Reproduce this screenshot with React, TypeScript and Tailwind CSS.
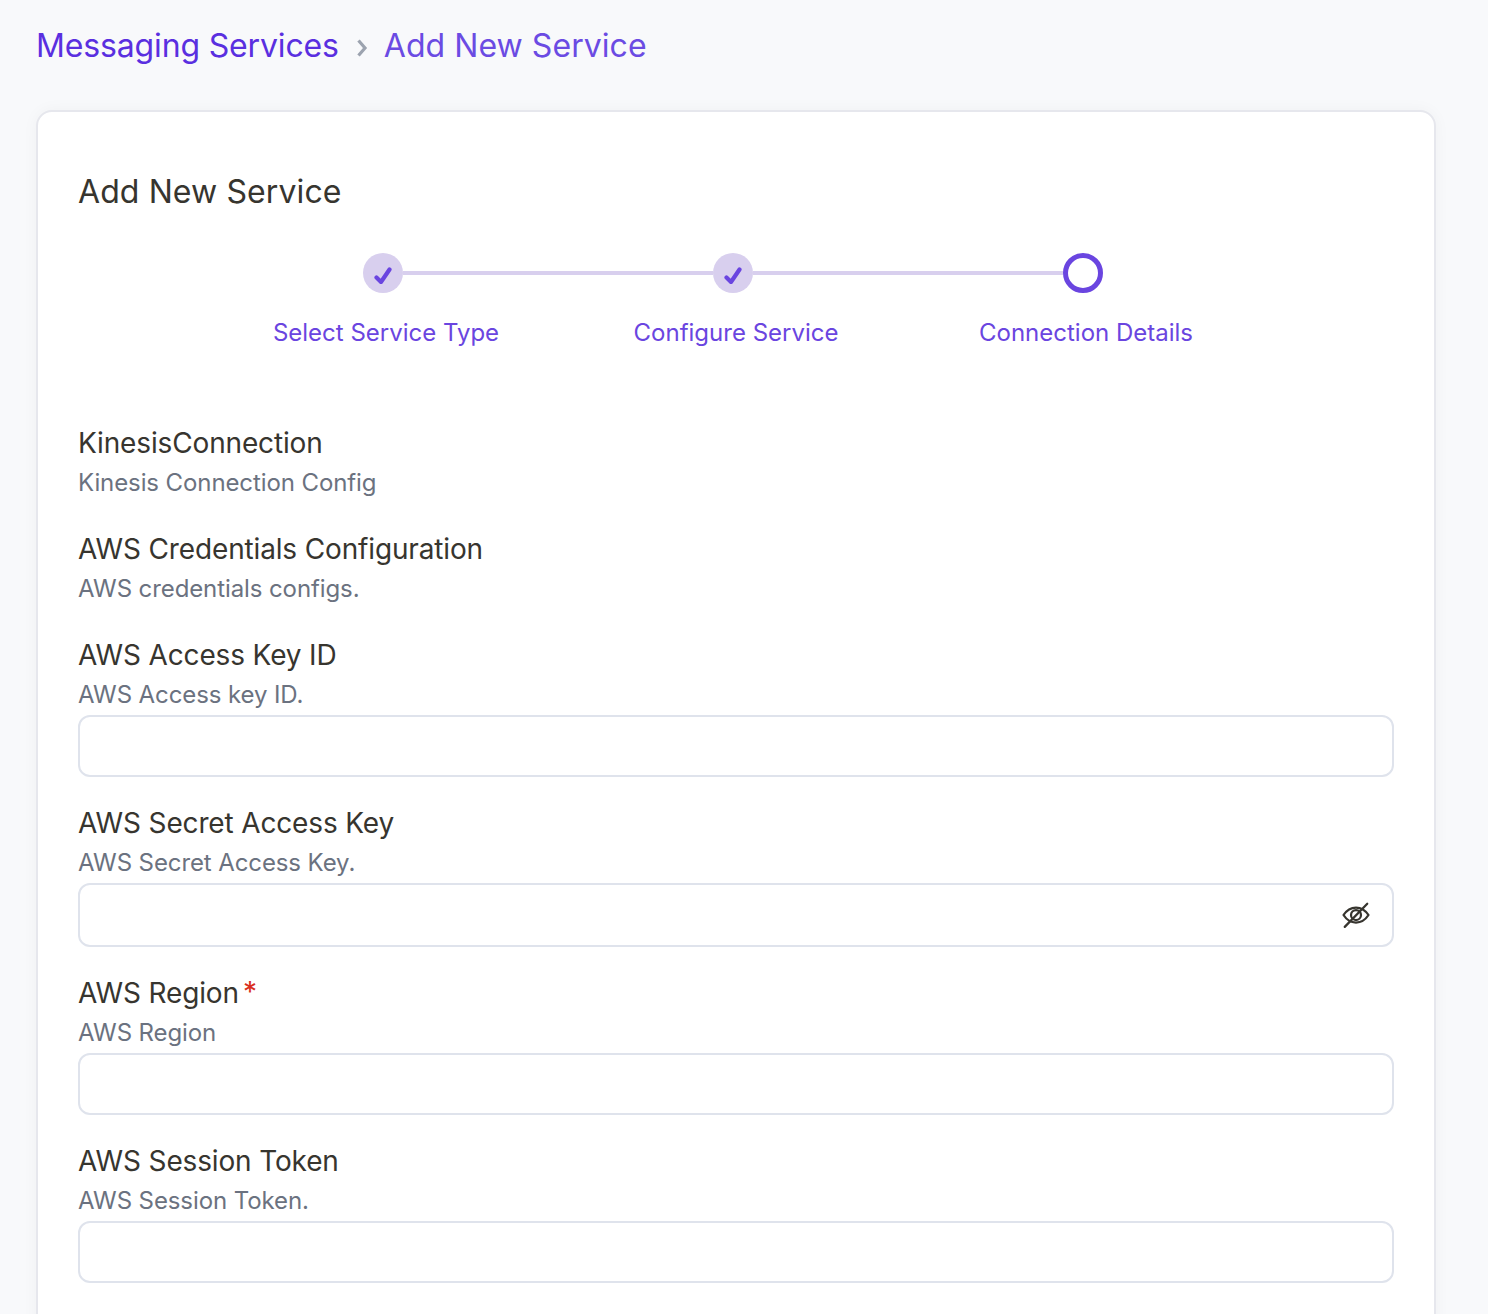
import { JSX } from "react";

const Field = ({
  label,
  desc,
  required,
  input,
  eye,
}: {
  label: string;
  desc: string;
  required?: boolean;
  input?: boolean;
  eye?: boolean;
}): JSX.Element => {
  return (
    <div className="flex flex-col">
      <div className="flex h-10 items-center pt-[2px] text-[28px] leading-10 tracking-[-0.15px] text-[#37352f]">
        <span>{label}</span>
        {required && <span className="ml-1 -mt-[2px] text-[#d92d20]">*</span>}
      </div>
      <div className="mt-px h-10 text-[24px] leading-10 tracking-[-0.1px] text-[#6b7280]">{desc}</div>
      {input && (
        <div
          className={`flex items-center justify-end rounded-xl border-2 border-[#dfe3ec] bg-white pr-[21px] ${
            eye ? "h-16" : "h-[62px]"
          }`}
        >
          {eye && (
            <svg width="30" height="30" viewBox="0 0 24 24" fill="none" stroke="#37352f" strokeWidth="1.800" strokeLinecap="round" strokeLinejoin="round">
              <path d="M2 12c2.600-4 6-6 10-6s7.400 2 10 6c-2.600 4-6 6-10 6s-7.400-2-10-6z" />
              <circle cx="12" cy="12" r="4" />
              <path d="M3 21.500L21 3" />
            </svg>
          )}
        </div>
      )}
    </div>
  );
};

const Done = (): JSX.Element => {
  return (
    <div className="flex h-10 w-10 shrink-0 items-center justify-center rounded-full bg-[#d8cfee]">
      <svg width="22" height="22" viewBox="0 0 22 22" fill="none" stroke="#6a45e0" strokeWidth="4.200" strokeLinecap="round" strokeLinejoin="round">
        <path d="M4.500 15.500L9 20L17.500 7.500" />
      </svg>
    </div>
  );
};

const App = (): JSX.Element => {
  return (
    <div className="h-[1314px] overflow-hidden bg-[#f8f9fb] pl-[36px] pr-[52px] font-['Inter',sans-serif]">
      <div className="flex h-[110px] items-start pt-[25px] text-[32px] leading-[42px]">
        <span className="tracking-[-0.15px] text-[#5a2fe0]">Messaging Services</span>
        <svg className="ml-3 mr-[13px] mt-3" width="20" height="20" viewBox="0 0 20 20" fill="none" stroke="#9ca3af" strokeWidth="3.200">
          <path d="M7.500 3.500L14 11L7.500 18.500" />
        </svg>
        <span className="tracking-[0.05px] text-[#6b4be3]">Add New Service</span>
      </div>
      <div className="h-[1400px] rounded-t-2xl border-2 border-[#e6e7ed] bg-white px-10 pt-[59px] shadow-[0_0_16px_rgba(0,0,0,0.04)]">
        <div className="h-[42px] text-[32px] leading-[42px] tracking-[0.1px] text-[#37352f]">Add New Service</div>
        <div className="mt-10">
          <div className="ml-[285px] flex w-[740px] items-center">
            <Done />
            <div className="h-1 flex-1 bg-[#d8cfee]" />
            <Done />
            <div className="h-1 flex-1 bg-[#d8cfee]" />
            <div className="h-10 w-10 shrink-0 rounded-full border-[5px] border-[#6a45e0]" />
          </div>
          <div className="ml-[133px] mt-6 grid w-[1050px] grid-cols-3 text-center text-[24px] leading-8 text-[#6a45e0]">
            <span>Select Service Type</span>
            <span>Configure Service</span>
            <span>Connection Details</span>
          </div>
        </div>
        <div className="mt-[73px] flex flex-col gap-[25px]">
          <Field label="KinesisConnection" desc="Kinesis Connection Config" />
          <Field label="AWS Credentials Configuration" desc="AWS credentials configs." />
          <Field label="AWS Access Key ID" desc="AWS Access key ID." input />
          <Field label="AWS Secret Access Key" desc="AWS Secret Access Key." input eye />
          <Field label="AWS Region" desc="AWS Region" required input />
          <Field label="AWS Session Token" desc="AWS Session Token." input />
        </div>
      </div>
    </div>
  );
};

export default App;
